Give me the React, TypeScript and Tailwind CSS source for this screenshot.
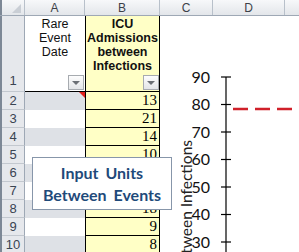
import React from 'react';

const rows = [
  { n: 2, v: '13' },
  { n: 3, v: '21' },
  { n: 4, v: '14' },
  { n: 5, v: '10' },
  { n: 6, v: '12' },
  { n: 7, v: '9' },
  { n: 8, v: '18' },
  { n: 9, v: '9' },
  { n: 10, v: '8' },
];

const ticks = [90, 80, 70, 60, 50, 40, 30];

function FilterButton() {
  return (
    <div className="w-[16px] h-[15px] border border-[#a7abb0] bg-gradient-to-b from-[#fdfdfd] to-[#e3e5e8] flex items-center justify-center">
      <div className="w-0 h-0 border-l-[4px] border-r-[4px] border-t-[4px] border-l-transparent border-r-transparent border-t-[#6b6f75]" />
    </div>
  );
}

function ColHeader({ label, w }: { label: string; w: string }) {
  return (
    <div className={`${w} shrink-0 h-full border-r border-[#b8c0ca] flex items-center justify-center text-[12px] text-[#3c4148]`}>
      {label}
    </div>
  );
}

export default function App() {
  return (
    <div className="relative w-[299px] h-[252px] overflow-hidden bg-white font-['Liberation_Sans',sans-serif]">
      {/* Column letters */}
      <div className="flex h-[16px] border-b border-[#9ea8b5] bg-gradient-to-b from-[#f7f8fa] to-[#e3e6ea]">
        <div className="w-[25px] shrink-0 h-full border-l-2 border-l-[#7d8896] border-r border-[#b8c0ca] relative">
          <div
            className="absolute right-[3px] bottom-[2px] w-0 h-0"
            style={{ borderBottom: '9px solid #c9ced5', borderLeft: '9px solid transparent' }}
          />
        </div>
        <ColHeader label="A" w="w-[60px]" />
        <ColHeader label="B" w="w-[75px]" />
        <ColHeader label="C" w="w-[53px]" />
        <ColHeader label="D" w="w-[72px]" />
        <div className="flex-1" />
      </div>

      <div className="flex">
        {/* Row numbers */}
        <div className="w-[25px] shrink-0 flex flex-col border-l-2 border-l-[#7d8896] bg-[#e6e8ec] text-[13px] text-[#3a4452]">
          <div className="h-[76px] border-b border-r border-[#c3c8cf] border-r-[#9ea8b5] flex items-end justify-center pb-[1px]">1</div>
          {rows.map((r) => (
            <div key={r.n} className="h-[18px] border-b border-r border-[#c3c8cf] border-r-[#9ea8b5] flex items-center justify-center">
              {r.n}
            </div>
          ))}
        </div>

        {/* Column A */}
        <div className="w-[60px] shrink-0 flex flex-col">
          <div className="h-[76px] border-b border-black relative text-[12.5px] leading-[14px] text-center text-[#111] pt-[1px]">
            Rare<br />Event<br />Date
            <div className="absolute right-[1px] bottom-[1px]">
              <FilterButton />
            </div>
          </div>
          {rows.map((r) => (
            <div key={r.n} className={`h-[18px] relative ${r.n % 2 === 0 ? 'bg-[#dee1e6]' : 'bg-white'}`}>
              {r.n === 2 && (
                <div className="absolute top-0 right-0 w-0 h-0 border-t-[6px] border-l-[6px] border-t-[#e0201c] border-l-transparent" />
              )}
            </div>
          ))}
        </div>

        {/* Column B */}
        <div className="w-[75px] shrink-0 flex flex-col border-l border-r border-black bg-[#ffffc6]">
          <div className="h-[76px] border-b border-black relative text-[12.5px] leading-[14px] text-center font-bold text-[#111] pt-[1px] whitespace-nowrap">
            ICU<br />Admissions<br />between<br />Infections
            <div className="absolute right-0 bottom-[1px]">
              <FilterButton />
            </div>
          </div>
          {rows.map((r) => (
            <div key={r.n} className="h-[18px] border-b border-black flex items-center justify-end pr-[2px] font-['Liberation_Serif',serif] text-[15px] text-black">
              {r.v}
            </div>
          ))}
        </div>

        {/* Chart */}
        <div className="flex-1 h-[236px]">
          <svg width="139" height="236" className="block">
            <text
              transform="translate(32 124) rotate(-90)"
              textAnchor="end"
              fontFamily="Lato, sans-serif"
              fontSize="15.5"
              fill="#222"
            >
              Admissions Between Infections
            </text>
            <line x1="66" y1="61" x2="66" y2="236" stroke="#000" strokeWidth="1.2" />
            {ticks.map((t, i) => {
              const y = 61 + i * 27.5;
              return (
                <g key={t}>
                  <line x1="61" y1={y} x2="71" y2={y} stroke="#000" strokeWidth="1.2" />
                  <text x="50" y={y + 5.5} textAnchor="end" fontFamily="Lato, sans-serif" fontSize="16" fill="#111">
                    {t}
                  </text>
                </g>
              );
            })}
            <line x1="73" y1="93" x2="139" y2="93" stroke="#d0202a" strokeWidth="2.5" strokeDasharray="15 7" />
          </svg>
        </div>
      </div>

      {/* Text box */}
      <div className="absolute left-[32px] top-[157px] w-[140px] h-[53px] border border-[#8796aa] bg-white flex flex-col items-center justify-center pt-[1px] font-['Lato',sans-serif] font-bold text-[16px] leading-[22px] text-[#1f4a7a] [word-spacing:3px]">
        <div>Input Units</div>
        <div>Between Events</div>
      </div>
    </div>
  );
}
